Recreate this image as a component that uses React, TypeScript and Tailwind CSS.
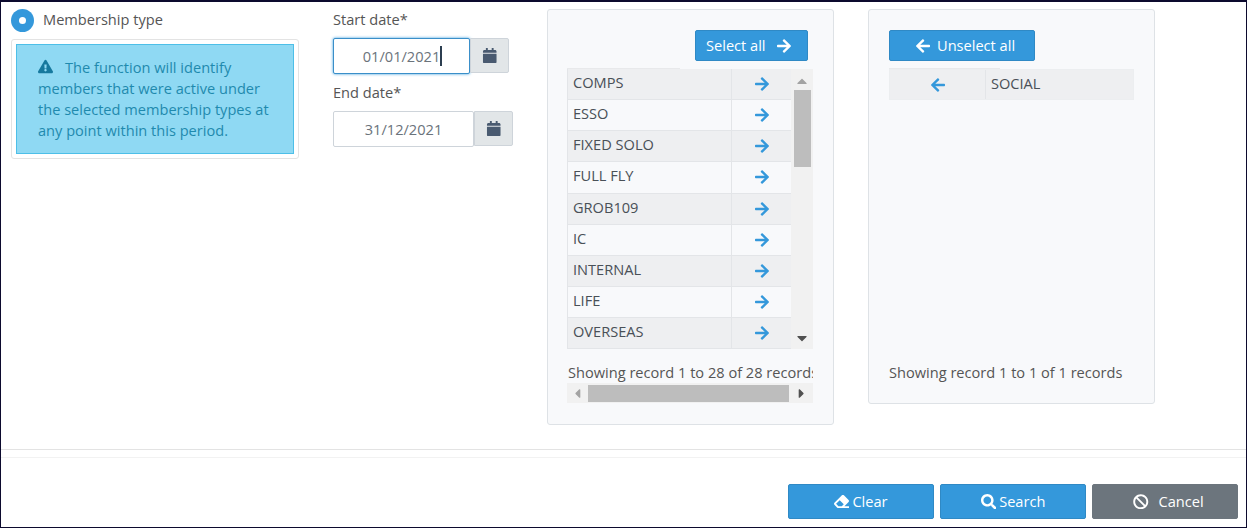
import { FaArrowLeft, FaArrowRight, FaBan, FaCalendar, FaCaretDown, FaCaretLeft, FaCaretRight, FaCaretUp, FaEraser, FaExclamationTriangle, FaSearch } from "react-icons/fa";

const rows = ["COMPS", "ESSO", "FIXED SOLO", "FULL FLY", "GROB109", "IC", "INTERNAL", "LIFE", "OVERSEAS"];

function DateField({ label, value, inputW, focused }: { label: string; value: string; inputW: string; focused?: boolean }) {
  return (
    <div className="flex flex-col">
      <div className="h-[20px] text-[14.6px] leading-[20px] text-[#555]">{label}</div>
      <div className="mt-[9px] flex h-[36px]">
        <div className={`${inputW} flex h-[36px] items-center justify-center rounded-[2px] border bg-white text-[14.6px] text-[#6b737b] ${focused ? "border-[#3a8fc9] pl-[2px] shadow-[0_0_3px_#3498db]" : "border-[#ced4da]"}`}>
          <span className="translate-y-[1px]">{value}</span>
          {focused && <span className="h-[20px] w-[2px] bg-[#2c3e50]" />}
        </div>
        <div className="flex h-[35px] w-[39px] items-center justify-center rounded-r-[2px] border border-[#ced4da] bg-[#e2e6e8] text-[#495a70]">
          <FaCalendar className="text-[15.5px]" />
        </div>
      </div>
    </div>
  );
}

export default function App() {
  return (
    <div className="flex h-[528px] w-[1247px] flex-col border border-t-2 border-[#0c0a2e] bg-white font-['Open_Sans',sans-serif] text-[14.6px] text-[#555]">
      <div className="flex h-[448px] items-start border-b border-[#e3e3e3] pt-[7px]">
        <div className="ml-[10px] w-[288px]">
          <div className="flex h-[23px] items-center">
            <span className="flex h-[23px] w-[23px] items-center justify-center rounded-full bg-[#3498db]">
              <span className="h-[7px] w-[7px] rounded-full bg-white" />
            </span>
            <span className="ml-[9px] -translate-y-[1px] text-[14.6px] text-[#555]">Membership type</span>
          </div>
          <div className="mt-[7px] rounded-[3px] border border-[#e3e3e3] p-[4px]">
            <div className="h-[110px] border border-[#4dbfe8] bg-[#8fd9f3] px-[21px] pt-[12px] text-[14.6px] leading-[21px] text-[#1f8aae]">
              <FaExclamationTriangle className="mr-[12px] inline-block align-[-1px] text-[15px] text-[#16799e]" />
              The function will identify members that were active under the selected membership types at any point within this period.
            </div>
          </div>
        </div>

        <div className="ml-[34px] flex w-[180px] flex-col gap-[8px]">
          <DateField label="Start date*" value="01/01/2021" inputW="w-[137px]" focused />
          <DateField label="End date*" value="31/12/2021" inputW="w-[141px]" />
        </div>

        <div className="ml-[34px] flex h-[416px] w-[287px] flex-col rounded-[3px] border border-[#dee2e6] bg-[#f8f9fb] pl-[19px] pt-[20px]">
          <div className="flex w-[241px] justify-end">
            <button className="flex h-[31px] w-[113px] items-center justify-start gap-[10px] rounded-[2px] border border-[#2f89c5] bg-[#3498db] pl-[10px] text-[14.6px] text-white">
              Select all <FaArrowRight className="text-[16px]" />
            </button>
          </div>
          <div className="mt-[7px] h-[1px] w-[113px] bg-[#e8e9eb]" />
          <div className="flex w-[246px]">
            <div className="w-[224px] border-l border-[#e3e5e8]">
              {rows.map((r, i) => (
                <div key={r} className={`flex h-[31.125px] border-b border-[#e3e5e8] ${i % 2 === 0 ? "bg-[#eeeff1]" : "bg-[#f8f9fb]"}`}>
                  <div className="flex w-[163px] -translate-y-[1px] items-center pl-[5px] text-[14.6px] text-[#495057]">{r}</div>
                  <div className="flex flex-1 items-center justify-center border-l border-[#e3e5e8] text-[#3498db]"><FaArrowRight className="text-[16px]" /></div>
                </div>
              ))}
            </div>
            <div className="flex h-[280px] w-[22px] flex-col items-center bg-[#f1f1f1]">
              <FaCaretUp className="mt-[4px] text-[16px] text-[#a3a3a3]" />
              <div className="mt-[1px] h-[77px] w-[17px] bg-[#bdbdbd]" />
              <div className="flex-1" />
              <FaCaretDown className="mb-[3px] text-[16px] text-[#505050]" />
            </div>
          </div>
          <div className="mt-[13px] w-[246px] overflow-hidden whitespace-nowrap pl-[1px] text-[14.6px] leading-[20px] text-[#555]">Showing record 1 to 28 of 28 records</div>
          <div className="mt-[1px] flex h-[20px] w-[246px] items-center bg-[#f1f1f1]">
            <div className="flex w-[21px] justify-center"><FaCaretLeft className="text-[15px] text-[#a3a3a3]" /></div>
            <div className="h-[17px] w-[201px] bg-[#bdbdbd]" />
            <div className="flex flex-1 justify-center"><FaCaretRight className="text-[15px] text-[#505050]" /></div>
          </div>
        </div>

        <div className="ml-[34px] flex h-[395px] w-[287px] flex-col rounded-[3px] border border-[#dee2e6] bg-[#f8f9fb] pl-[20px] pt-[20px]">
          <button className="flex h-[31px] w-[146px] items-center justify-start gap-[6px] rounded-[2px] border border-[#2f89c5] bg-[#3498db] pl-[25px] text-[14.6px] text-white">
            <FaArrowLeft className="text-[16px]" /> Unselect all
          </button>
          <div className="mt-[7px] h-[1px] w-[111px] bg-[#e8e9eb]" />
          <div className="flex h-[31px] w-[245px] border border-[#eceef0] bg-[#eeeff1]">
            <div className="flex w-[96px] items-center justify-center border-r border-[#e3e5e8] text-[#3498db]"><FaArrowLeft className="text-[16px]" /></div>
            <div className="flex flex-1 -translate-y-[1px] items-center pl-[5px] text-[14.6px] text-[#495057]">SOCIAL</div>
          </div>
          <div className="mt-[262px] text-[14.6px] leading-[20px] text-[#555]">Showing record 1 to 1 of 1 records</div>
        </div>
      </div>

      <div className="mt-[7px] flex flex-1 items-start justify-end gap-[6px] border-t border-[#f2f2f2] pr-[8px] pt-[26px]">
        <button className="flex h-[35px] w-[146px] items-center justify-center gap-[3px] rounded-[2px] border border-[#2f89c5] bg-[#3498db] text-[14.6px] text-white">
          <FaEraser className="text-[15px]" /> Clear
        </button>
        <button className="flex h-[35px] w-[146px] items-center justify-center gap-[3px] rounded-[2px] border border-[#2f89c5] bg-[#3498db] text-[14.6px] text-white">
          <FaSearch className="text-[15.5px]" /> Search
        </button>
        <button className="flex h-[35px] w-[146px] items-center justify-start gap-[10px] rounded-[2px] border border-[#6c757d] bg-[#6c757d] pl-[40px] text-[14.6px] text-white">
          <FaBan className="text-[15.5px]" /> Cancel
        </button>
      </div>
    </div>
  );
}
